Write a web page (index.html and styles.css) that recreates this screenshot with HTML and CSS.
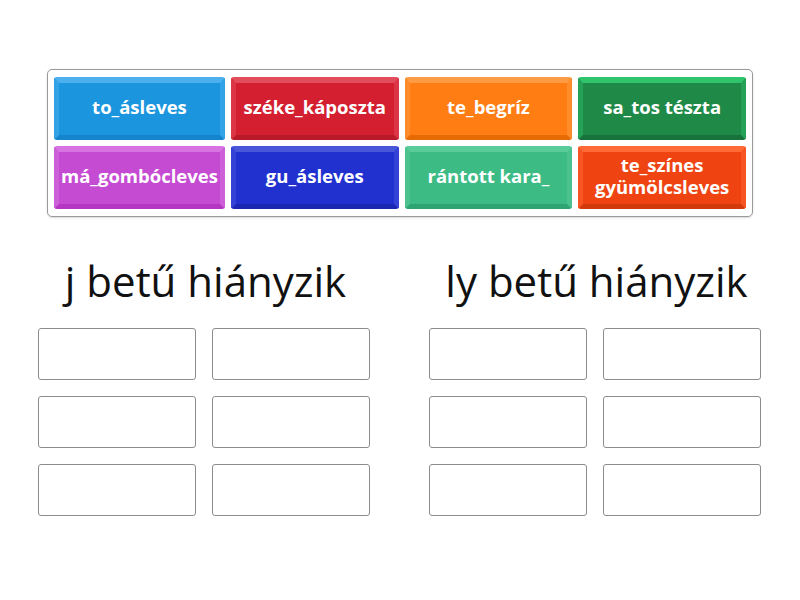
FILE: index.html
```html
<!DOCTYPE html>
<html lang="hu">
<head>
<meta charset="utf-8">
<link rel="stylesheet" href="styles.css">
</head>
<body>
<div class="page">
  <div class="bank">
    <div class="tile c-blue">to_ásleves</div>
    <div class="tile c-red">széke_káposzta</div>
    <div class="tile c-orange">te_begríz</div>
    <div class="tile c-green">sa_tos tészta</div>
    <div class="tile c-purple">má_gombócleves</div>
    <div class="tile c-navy">gu_ásleves</div>
    <div class="tile c-teal">rántott kara_</div>
    <div class="tile c-flame">te_színes gyümölcsleves</div>
  </div>
  <div class="groups">
    <div class="group">
      <h2 class="title">j betű hiányzik</h2>
      <div class="slots">
        <div class="slot"></div><div class="slot"></div>
        <div class="slot"></div><div class="slot"></div>
        <div class="slot"></div><div class="slot"></div>
      </div>
    </div>
    <div class="group">
      <h2 class="title">ly betű hiányzik</h2>
      <div class="slots">
        <div class="slot"></div><div class="slot"></div>
        <div class="slot"></div><div class="slot"></div>
        <div class="slot"></div><div class="slot"></div>
      </div>
    </div>
  </div>
</div>
</body>
</html>
```

FILE: styles.css
```css
html, body {
  margin: 0;
  padding: 0;
  background: #ffffff;
}
body {
  font-family: "Open Sans", "Liberation Sans", sans-serif;
  width: 800px;
  height: 600px;
  overflow: hidden;
}
.page {
  display: flex;
  flex-direction: column;
  align-items: center;
  padding-top: 69px;
}
.bank {
  width: 692px;
  border: 1px solid #9a9a9a;
  border-radius: 5px;
  padding: 7px 6px 7px 6px;
  display: grid;
  grid-template-columns: repeat(4, 1fr);
  grid-auto-rows: 63px;
  column-gap: 6px;
  row-gap: 6px;
  box-shadow: 0 1px 2px rgba(0,0,0,0.15);
}
.tile {
  box-sizing: border-box;
  border-radius: 3px;
  border-style: solid;
  border-width: 6px 5px 5px 5px;
  display: flex;
  align-items: center;
  justify-content: center;
  text-align: center;
  color: #ffffff;
  font-weight: 700;
  font-size: 18.5px;
  line-height: 22px;
  padding: 0 2px 4px;
}
.c-blue   { background: #1b95de; border-color: #4db0ee #33a3e8 #1485cc #33a3e8; }
.c-red    { background: #d31f30; border-color: #e24d5b #dc3545 #b81a29 #dc3545; }
.c-orange { background: #ff7d12; border-color: #ff9a45 #ff8c2a #e66b05 #ff8c2a; }
.c-green  { background: #1f8a48; border-color: #30c56c #25a257 #18723b #25a257; }
.c-purple { background: #c54bd3; border-color: #d774e1 #cd5fd9 #b436c2 #cd5fd9; }
.c-navy   { background: #2131cf; border-color: #4856da #3442d5 #1a27b3 #3442d5; }
.c-teal   { background: #3cbb85; border-color: #5ccb9a #4cc38f #2ea472 #4cc38f; }
.c-flame  { background: #ef4412; border-color: #ff6a36 #f85524 #d23a0c #f85524; }
.groups {
  display: flex;
  gap: 59px;
  margin-top: 39px;
  margin-left: -1px;
}
.group {
  width: 332px;
  display: flex;
  flex-direction: column;
  align-items: center;
}
.title {
  margin: 0 0 0 3px;
  font-weight: 400;
  font-size: 42px;
  line-height: 50px;
  color: #111111;
}
.slots {
  margin-top: 22px;
  display: grid;
  grid-template-columns: repeat(2, 158px);
  grid-auto-rows: 52px;
  column-gap: 16px;
  row-gap: 16px;
}
.slot {
  box-sizing: border-box;
  border: 1px solid #8c8c8c;
  border-radius: 3px;
  background: #ffffff;
}
```
